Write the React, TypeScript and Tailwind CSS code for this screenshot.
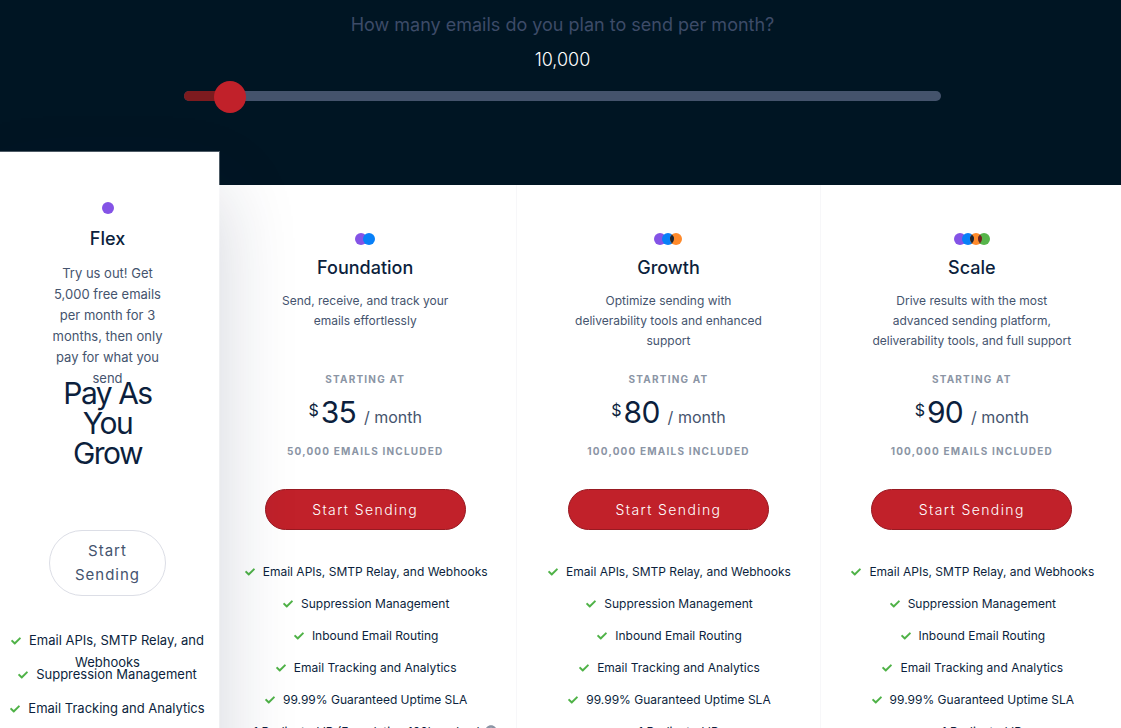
import { useState } from "react";
import { FaCheck, FaInfoCircle } from "react-icons/fa";
import clsx from "clsx";

type Plan = {
  name: string;
  tier: number;
  description: string;
  price: number;
  included: string;
  features: string[];
};

const baseFeatures = [
  "Email APIs, SMTP Relay, and Webhooks",
  "Suppression Management",
  "Inbound Email Routing",
  "Email Tracking and Analytics",
  "99.99% Guaranteed Uptime SLA",
];

const plans: Plan[] = [
  {
    name: "Foundation",
    tier: 2,
    description: "Send, receive, and track your emails effortlessly",
    price: 35,
    included: "50,000 emails included",
    features: [...baseFeatures, "1 Dedicated IP (Foundation 100k and up)"],
  },
  {
    name: "Growth",
    tier: 3,
    description: "Optimize sending with deliverability tools and enhanced support",
    price: 80,
    included: "100,000 emails included",
    features: [...baseFeatures, "1 Dedicated IP"],
  },
  {
    name: "Scale",
    tier: 4,
    description:
      "Drive results with the most advanced sending platform, deliverability tools, and full support",
    price: 90,
    included: "100,000 emails included",
    features: [...baseFeatures, "1 Dedicated IP"],
  },
];

const flexFeatures = [
  "Email APIs, SMTP Relay, and Webhooks",
  "Suppression Management",
  "Email Tracking and Analytics",
];

const dotColors = ["#8453e6", "#0880f8", "#ff8a2b", "#56b54a"];

const TierDots = ({ count }: { count: number }) => {
  const width = 12 + (count - 1) * 8;
  return (
    <svg width={width} height="12" viewBox={`0 0 ${width} 12`} className="mx-auto block" aria-hidden="true">
      {dotColors.slice(0, count).map((color, i) => (
        <circle key={color} cx={6 + i * 8} cy="6" r="6" fill={color} />
      ))}
      {/* the darker lens where two neighbouring circles cross */}
      {count > 2 && <path d="M18 1.53a6 6 0 0 1 0 8.94a6 6 0 0 1 0-8.94z" fill="#1c2430" />}
      {count > 3 && <path d="M26 1.53a6 6 0 0 1 0 8.94a6 6 0 0 1 0-8.94z" fill="#74221f" />}
    </svg>
  );
};

const Check = () => <FaCheck className="mr-2 inline-block size-2.5 align-[-1px] text-[#4fb247]" />;

const VolumeSlider = () => {
  const max = 240000;
  const [volume, setVolume] = useState(10000);
  const fill = (volume / max) * 100;

  return (
    <header className="-mr-1 bg-[#001523] px-6 pt-[11px] pb-[72px] text-center">
      <label htmlFor="volume" className="block text-lg leading-7 text-[#3d4b68]">
        How many emails do you plan to send per month?
      </label>
      <output htmlFor="volume" className="mt-[7px] block text-lg leading-7 font-light text-white">
        {volume.toLocaleString("en-US")}
      </output>
      <div className="relative mx-auto mt-[7px] flex h-8 max-w-[757px] items-center pb-0.5">
        <div className="h-2.5 w-full overflow-hidden rounded-full bg-[#44536c]">
          <div className="h-full bg-[#7d1b1f]" style={{ width: `calc(16px + (100% - 32px) * ${fill / 100})` }} />
        </div>
        <input
          id="volume"
          type="range"
          min={0}
          max={max}
          step={10000}
          value={volume}
          onChange={(e) => setVolume(Number(e.target.value))}
          className="absolute inset-0 h-8 w-full cursor-pointer appearance-none bg-transparent [&::-webkit-slider-thumb]:size-8 [&::-webkit-slider-thumb]:appearance-none [&::-webkit-slider-thumb]:rounded-full [&::-webkit-slider-thumb]:bg-[#c1212a]"
        />
      </div>
    </header>
  );
};

const FlexCard = () => (
  <section className="relative z-10 -mt-[34px] -ml-1 w-56 shrink-0 border-t border-r border-white/30 bg-white bg-clip-padding pt-[50px] text-center shadow-[0_40px_72px_rgba(20,30,70,0.19)]">
    <TierDots count={1} />
    <h2 className="mt-[11px] text-lg leading-7 font-medium">Flex</h2>
    <p className="mx-auto mt-2.5 h-[115px] w-[116px] text-[13px] leading-[21px] text-[#45546e]">
      Try us out! Get 5,000 free emails per month for 3 months, then only pay for what you send
    </p>
    <p className="mx-auto w-[116px] text-3xl leading-[30px] tracking-tighter">Pay As You Grow</p>
    <button className="mt-[62px] w-[117px] rounded-full border border-[#dcdee6] px-5 py-2 text-[15px] leading-6 tracking-[1px] text-[#45546e]">
      Start Sending
    </button>
    <ul className="mt-[33px] px-2 text-[13px] leading-[22px]">
      {flexFeatures.map((feature) => (
        <li key={feature} className="h-[34px]">
          <Check />
          {feature}
        </li>
      ))}
    </ul>
  </section>
);

const PlanColumn = ({ plan, last }: { plan: Plan; last: boolean }) => (
  <section className={clsx("flex-1 basis-0 pt-12 pb-8 text-center", !last && "border-r border-[#f7f7f9]")}>
    <TierDots count={plan.tier} />
    <h2 className="mt-[9px] text-lg leading-7 font-medium">{plan.name}</h2>
    <p className="mx-auto mt-[9px] min-h-[60px] max-w-[200px] text-xs leading-5 text-[#45546e]">{plan.description}</p>
    <p className="mt-[18px] text-[10px] leading-5 font-bold tracking-[0.12em] text-[#8b95a5] uppercase">Starting at</p>
    <p className="mt-[3px] flex h-10 items-center justify-center">
      <span className="mr-0.5 mb-1 text-base leading-7">$</span>
      <span className="text-3xl leading-10 tracking-tight">{plan.price}</span>
      <span className="mt-2.5 ml-2 text-base leading-7 text-[#45546e]">/ month</span>
    </p>
    <p className="mt-[9px] text-[10px] leading-5 font-bold tracking-[0.12em] text-[#8b95a5] uppercase">{plan.included}</p>
    <button className="mt-7 h-[41px] w-[201px] rounded-full border border-[#981a22] bg-[#c1212a] text-sm font-light tracking-widest text-white">
      Start Sending
    </button>
    <ul className="mt-[26px] pl-0.5 text-xs leading-8 whitespace-nowrap">
      {plan.features.map((feature) => (
        <li key={feature}>
          <Check />
          {feature}
          {feature.includes("(") && <FaInfoCircle className="ml-1 inline-block size-3 align-[-1px] text-[#8b95a5]" />}
        </li>
      ))}
    </ul>
  </section>
);

const App = () => {
  return (
    <div className="flex min-h-screen flex-col overflow-hidden bg-white font-['Inter',sans-serif] text-[#0c1f3d]">
      <VolumeSlider />
      <main className="flex grow">
        <FlexCard />
        <div className="-mr-0.5 -ml-1.5 flex grow">
          {plans.map((plan, i) => (
            <PlanColumn key={plan.name} plan={plan} last={i === plans.length - 1} />
          ))}
        </div>
      </main>
    </div>
  );
};

export default App;
